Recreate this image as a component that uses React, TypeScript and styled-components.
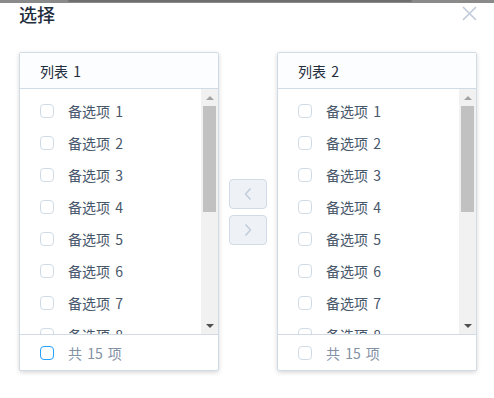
import styled, { createGlobalStyle } from 'styled-components';

const GlobalStyle = createGlobalStyle`
  html, body {
    margin: 0;
    padding: 0;
    background: #fff;
    font-family: "Noto Sans CJK SC", "Noto Sans", sans-serif;
  }
`;

const items = Array.from({ length: 15 }, (_, i) => `备选项 ${i + 1}`);

function Transfer() {
  return (
    <StyledPage>
      <StyledTopStrip>
        <StyledStripInner />
      </StyledTopStrip>
      <StyledHeader>
        <StyledTitle>选择</StyledTitle>
        <StyledClose aria-label="close">
          <svg width="15" height="15" viewBox="0 0 15 15">
            <path d="M1 1 L14 14 M14 1 L1 14" stroke="#bfcbd9" strokeWidth="1.6" />
          </svg>
        </StyledClose>
      </StyledHeader>
      <StyledBody>
        <Panel title="列表 1" $focused />
        <StyledButtons>
          <StyledArrowBtn disabled>
            <svg width="10" height="14" viewBox="0 0 10 14">
              <path d="M7.5 1.5 L2.5 7 L7.5 12.5" fill="none" stroke="#bfcbd9" strokeWidth="1.4" />
            </svg>
          </StyledArrowBtn>
          <StyledArrowBtn disabled>
            <svg width="10" height="14" viewBox="0 0 10 14">
              <path d="M2.5 1.5 L7.5 7 L2.5 12.5" fill="none" stroke="#bfcbd9" strokeWidth="1.4" />
            </svg>
          </StyledArrowBtn>
        </StyledButtons>
        <Panel title="列表 2" />
      </StyledBody>
    </StyledPage>
  );
}

function Panel({ title, $focused = false }: { title: string; $focused?: boolean }) {
  return (
    <StyledPanel>
      <StyledPanelHeader>{title}</StyledPanelHeader>
      <StyledPanelBody>
        <StyledList>
          {items.map((item) => (
            <StyledItem key={item}>
              <StyledCheckbox />
              <span>{item}</span>
            </StyledItem>
          ))}
        </StyledList>
        <StyledScrollTrack>
          <StyledScrollBtn>
            <svg width="8" height="4" viewBox="0 0 8 4">
              <polygon points="0,4 8,4 4,0" fill="#a3a3a3" />
            </svg>
          </StyledScrollBtn>
          <StyledThumbArea>
            <StyledThumb />
          </StyledThumbArea>
          <StyledScrollBtn>
            <svg width="8" height="4" viewBox="0 0 8 4">
              <polygon points="0,0 8,0 4,4" fill="#505050" />
            </svg>
          </StyledScrollBtn>
        </StyledScrollTrack>
      </StyledPanelBody>
      <StyledFooter>
        <StyledCheckbox $focused={$focused} />
        <span>共 15 项</span>
      </StyledFooter>
    </StyledPanel>
  );
}

const StyledPage = styled.div`
  width: 494px;
  height: 398px;
  overflow: hidden;
`;

const StyledTopStrip = styled.div`
  height: 3px;
  background: #8a8a8a;
  padding: 0 82px 0 68px;
`;

const StyledStripInner = styled.div`
  height: 2px;
  background: #6f6f6f;
  border-radius: 0 0 4px 4px;
`;

const StyledHeader = styled.div`
  display: flex;
  justify-content: space-between;
  align-items: flex-start;
  padding: 0 17px 0 19px;
  height: 49px;
`;

const StyledTitle = styled.div`
  font-size: 18px;
  line-height: 22px;
  font-weight: 500;
  color: #1f2d3d;
`;

const StyledClose = styled.div`
  display: flex;
  padding-top: 3px;
`;

const StyledBody = styled.div`
  display: flex;
  align-items: center;
  padding: 0 17px 0 19px;
`;

const StyledPanel = styled.div`
  width: 200px;
  box-sizing: border-box;
  border: 1px solid #d1dbe5;
  border-radius: 2px;
  background: #fff;
  box-shadow: 0 2px 4px rgba(0, 0, 0, 0.12), 0 0 6px rgba(0, 0, 0, 0.04);
`;

const StyledPanelHeader = styled.div`
  height: 36px;
  line-height: 36px;
  box-sizing: border-box;
  border-bottom: 1px solid #d1dbe5;
  background: #fbfdff;
  padding-left: 20px;
  font-size: 14px;
  color: #1f2d3d;
  word-spacing: 2px;
`;

const StyledPanelBody = styled.div`
  display: flex;
  height: 245px;
`;

const StyledList = styled.div`
  flex: 1;
  box-sizing: border-box;
  padding-top: 6px;
  overflow: hidden;
`;

const StyledScrollTrack = styled.div`
  display: flex;
  flex-direction: column;
  width: 17px;
  background: #f1f1f1;
`;

const StyledScrollBtn = styled.div`
  display: flex;
  align-items: center;
  justify-content: center;
  height: 17px;
`;

const StyledThumbArea = styled.div`
  flex: 1;
  padding: 0 2px;
`;

const StyledThumb = styled.div`
  height: 106px;
  background: #c1c1c1;
`;

const StyledItem = styled.div`
  display: flex;
  align-items: center;
  gap: 14px;
  height: 32px;
  padding-left: 20px;
  font-size: 14px;
  color: #48576a;
  white-space: nowrap;
  word-spacing: 2px;
`;

const StyledCheckbox = styled.span<{ $focused?: boolean }>`
  display: inline-block;
  flex: none;
  width: 14px;
  height: 14px;
  box-sizing: border-box;
  border: 1px solid ${(props) => (props.$focused ? '#20a0ff' : '#d1dbe5')};
  border-radius: 4px;
  background: #fff;
`;

const StyledFooter = styled.div`
  display: flex;
  align-items: center;
  gap: 14px;
  height: 36px;
  box-sizing: border-box;
  border-top: 1px solid #d1dbe5;
  padding-left: 20px;
  font-size: 14px;
  color: #8391a5;
  word-spacing: 2px;
`;

const StyledButtons = styled.div`
  display: flex;
  flex-direction: column;
  align-items: center;
  gap: 6px;
  width: 58px;
`;

const StyledArrowBtn = styled.button`
  display: flex;
  align-items: center;
  justify-content: center;
  width: 38px;
  height: 30px;
  padding: 0;
  box-sizing: border-box;
  border: 1px solid #d1dbe5;
  border-radius: 4px;
  background: #eef1f6;
  cursor: not-allowed;
`;

export default function App() {
  return (
    <>
      <GlobalStyle />
      <Transfer />
    </>
  );
}
